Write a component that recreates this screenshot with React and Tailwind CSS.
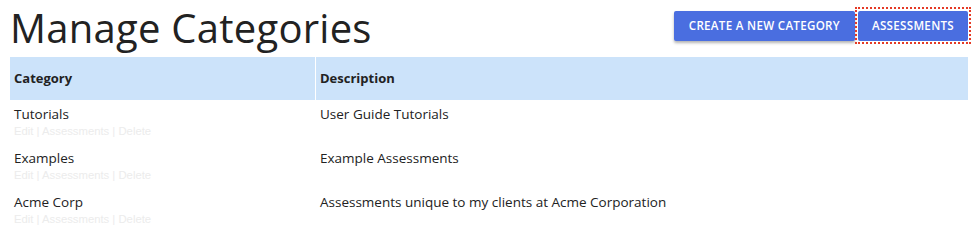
const categories = [
  { name: 'Tutorials', description: 'User Guide Tutorials' },
  { name: 'Examples', description: 'Example Assessments' },
  { name: 'Acme Corp', description: 'Assessments unique to my clients at Acme Corporation' },
];

const App = () => {
  return (
    <div className="w-[980px] h-[232px] bg-white overflow-hidden" style={{ fontFamily: '"Open Sans", "Noto Sans", sans-serif' }}>
      <div className="flex items-start justify-between pl-[10px] pr-[12px]">
        <h1 className="text-[40px] leading-[56px] text-[#222] font-normal tracking-[0.25px]">Manage Categories</h1>
        <div className="flex items-start mt-[7px]">
          <button className="mt-[4px] h-[30px] px-[15px] bg-[#4a6ee0] text-white text-[11.6px] font-semibold tracking-[0.3px] rounded-[2px] shadow-[0_2px_3px_rgba(0,0,0,0.3)]">
            CREATE A NEW CATEGORY
          </button>
          <div className="-mr-[3px] pt-[2px] pb-[1px] px-[1px] border-2 border-dotted border-[#e53a25]">
            <button className="h-[30px] w-[110px] bg-[#4a6ee0] text-white text-[11.6px] font-semibold tracking-[0.3px] rounded-[2px] block">
              ASSESSMENTS
            </button>
          </div>
        </div>
      </div>

      <div className="ml-[10px] mr-[12px] mt-[1px] text-[13.5px] text-[#222]">
        <div className="flex h-[43px] bg-[#cce3fa] font-bold text-[13px]">
          <div className="w-[306px] flex items-center pl-[4px] border-r border-white">Category</div>
          <div className="flex-1 flex items-center pl-[4px]">Description</div>
        </div>
        {categories.map((c) => (
          <div key={c.name} className="flex h-[44px]">
            <div className="w-[306px] pl-[4px] pt-[4px]">
              <div className="leading-[20px]">{c.name}</div>
              <div className="text-[11.3px] leading-[14px] text-[#ececec]" style={{ fontFamily: '"Liberation Sans", Arial, sans-serif' }}>
                Edit | Assessments | Delete
              </div>
            </div>
            <div className="flex-1 pl-[4px] pt-[4px] leading-[20px]">{c.description}</div>
          </div>
        ))}
      </div>
    </div>
  );
};

export default App;
